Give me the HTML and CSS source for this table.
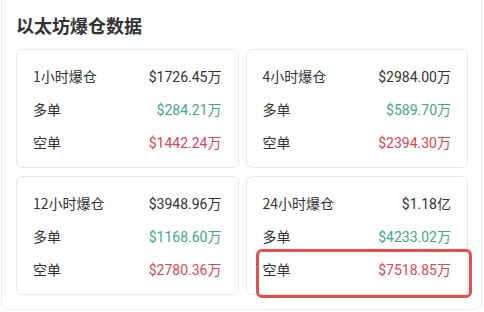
FILE: index.html
```html
<!DOCTYPE html>
<html lang="zh-CN">
<head>
<meta charset="utf-8">
<link rel="stylesheet" href="styles.css">
</head>
<body>
<div class="panel">
  <h2 class="title">以太坊爆仓数据</h2>
  <div class="grid">
    <div class="card">
      <div class="row"><span class="label">1小时爆仓</span><span class="val">$1726.45万</span></div>
      <div class="row"><span class="label">多单</span><span class="val up">$284.21万</span></div>
      <div class="row"><span class="label">空单</span><span class="val down">$1442.24万</span></div>
    </div>
    <div class="card">
      <div class="row"><span class="label">4小时爆仓</span><span class="val">$2984.00万</span></div>
      <div class="row"><span class="label">多单</span><span class="val up">$589.70万</span></div>
      <div class="row"><span class="label">空单</span><span class="val down">$2394.30万</span></div>
    </div>
    <div class="card">
      <div class="row"><span class="label">12小时爆仓</span><span class="val">$3948.96万</span></div>
      <div class="row"><span class="label">多单</span><span class="val up">$1168.60万</span></div>
      <div class="row"><span class="label">空单</span><span class="val down">$2780.36万</span></div>
    </div>
    <div class="card">
      <div class="row"><span class="label">24小时爆仓</span><span class="val">$1.18亿</span></div>
      <div class="row"><span class="label">多单</span><span class="val up">$4233.02万</span></div>
      <div class="row"><span class="label">空单</span><span class="val down">$7518.85万</span></div>
      <div class="highlight"></div>
    </div>
  </div>
</div>
</body>
</html>
```

FILE: styles.css
```css
html, body {
  margin: 0;
  padding: 0;
  background: #ffffff;
}
body {
  font-family: "Noto Sans CJK SC", "Noto Sans", sans-serif;
  color: #333333;
  overflow: hidden;
}
.panel {
  box-sizing: border-box;
  width: 481px;
  margin: -8px 0 0 1px;
  padding: 20px 13px 14px 14px;
  border: 1px solid #ececec;
  border-radius: 8px;
  background: #ffffff;
}
.title {
  margin: 0 0 12px 0;
  font-size: 18px;
  line-height: 24px;
  font-weight: 700;
  color: #333333;
}
.grid {
  display: grid;
  grid-template-columns: 1fr 1fr;
  gap: 8px 7px;
}
.card {
  position: relative;
  padding: 9px 16px;
  border: 1px solid #e8e8e8;
  border-radius: 6px;
}
.row {
  height: 33px;
  display: flex;
  align-items: center;
  justify-content: space-between;
  font-size: 14px;
}
.label {
  color: #333333;
}
.val {
  font-family: "Roboto", "Noto Sans CJK SC", sans-serif;
  color: #333333;
}
.val.up {
  color: #3fa88b;
}
.val.down {
  color: #df4551;
}
.highlight {
  position: absolute;
  left: 9px;
  top: 72px;
  box-sizing: border-box;
  width: 216px;
  height: 49px;
  border: 3px solid #e5504f;
  border-radius: 6px;
}
```
